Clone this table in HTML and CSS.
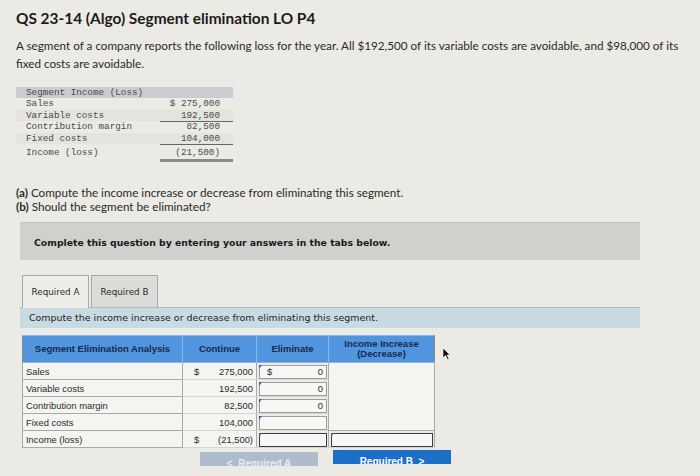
FILE: index.html
```html
<!DOCTYPE html>
<html lang="en">
<head>
<meta charset="utf-8">
<title>QS 23-14 (Algo) Segment elimination LO P4</title>
<link rel="stylesheet" href="styles.css">
</head>
<body>
<div class="page">
  <h1 class="title">QS 23-14 (Algo) Segment elimination LO P4</h1>
  <p class="intro">A segment of a company reports the following loss for the year. All $192,500 of its variable costs are avoidable, and $98,000 of its fixed costs are avoidable.</p>

  <div class="fin">
    <div class="fin-head">Segment Income (Loss)</div>
    <div class="fin-row"><span class="fin-label">Sales</span><span class="fin-val">$ 275,000</span></div>
    <div class="fin-row shade"><span class="fin-label">Variable costs</span><span class="fin-val rule">192,500</span></div>
    <div class="fin-row"><span class="fin-label">Contribution margin</span><span class="fin-val">82,500</span></div>
    <div class="fin-row shade"><span class="fin-label">Fixed costs</span><span class="fin-val rule">104,000</span></div>
    <div class="fin-row total"><span class="fin-label">Income (loss)</span><span class="fin-val double">(21,500)</span></div>
  </div>

  <p class="parts"><b>(a)</b> Compute the income increase or decrease from eliminating this segment.<br><b>(b)</b> Should the segment be eliminated?</p>

  <div class="instr">Complete this question by entering your answers in the tabs below.</div>

  <div class="tabs">
    <div class="tab active">Required A</div>
    <div class="tab">Required B</div>
  </div>
  <div class="prompt">Compute the income increase or decrease from eliminating this segment.</div>

  <div class="table-wrap">
    <table class="sea">
      <colgroup>
        <col class="c-label"><col class="c-cont"><col class="c-elim"><col class="c-inc">
      </colgroup>
      <thead>
        <tr>
          <th>Segment Elimination Analysis</th>
          <th>Continue</th>
          <th>Eliminate</th>
          <th>Income Increase<br>(Decrease)</th>
        </tr>
      </thead>
      <tbody>
        <tr>
          <td class="lbl">Sales</td>
          <td class="num"><span class="cur">$</span><span>275,000</span></td>
          <td class="inp"><div class="box"><span class="cur">$</span><span>0</span></div></td>
          <td class="inc" rowspan="4"></td>
        </tr>
        <tr>
          <td class="lbl">Variable costs</td>
          <td class="num"><span class="cur"></span><span>192,500</span></td>
          <td class="inp"><div class="box"><span class="cur"></span><span>0</span></div></td>
        </tr>
        <tr>
          <td class="lbl">Contribution margin</td>
          <td class="num"><span class="cur"></span><span>82,500</span></td>
          <td class="inp"><div class="box"><span class="cur"></span><span>0</span></div></td>
        </tr>
        <tr>
          <td class="lbl">Fixed costs</td>
          <td class="num"><span class="cur"></span><span>104,000</span></td>
          <td class="inp"><div class="box"></div></td>
        </tr>
        <tr>
          <td class="lbl">Income (loss)</td>
          <td class="num"><span class="cur">$</span><span>(21,500)</span></td>
          <td class="inp"><div class="box dark"></div></td>
          <td class="inp"><div class="box dark"></div></td>
        </tr>
      </tbody>
    </table>
    <svg class="cursor" width="9" height="13" viewBox="0 0 9 13"><path d="M1 1 L1 11 L3.5 8.5 L5.5 12.5 L7 11.8 L5 8 L8 8 Z" fill="#111" stroke="#fff" stroke-width="0.6"/></svg>
  </div>

  <div class="nav">
    <div class="btn prev">&lt;&nbsp; Required A</div>
    <div class="btn next">Required B &nbsp;&gt;</div>
  </div>
</div>
</body>
</html>
```

FILE: styles.css
```css
* { box-sizing: border-box; }

html, body {
  margin: 0;
  padding: 0;
  height: 100%;
  overflow: hidden;
}

body {
  background: #ebeae4;
  color: #222;
  font-family: Lato, "Open Sans", sans-serif;
}

.page {
  padding: 8px 16px 0 16px;
}

.title {
  margin: 0;
  font-family: Lato, sans-serif;
  font-weight: 700;
  font-size: 15.4px;
  line-height: 20px;
  color: #1c1c1c;
}

.intro {
  margin: 8px 0 0 0;
  font-size: 11.7px;
  line-height: 18px;
  color: #2a2a2a;
}

.fin {
  margin-top: 15px;
  width: 217px;
  font-family: "Liberation Mono", monospace;
  font-size: 9.3px;
  color: #4a4a4a;
}

.fin-head {
  background: #c9ccd0;
  height: 11px;
  line-height: 11px;
  padding-left: 10px;
}

.fin-row {
  display: grid;
  grid-template-columns: 144px 73px;
  height: 11.5px;
  line-height: 11.5px;
}

.fin-row.shade { background: #e3e3df; }

.fin-row.total {
  margin-top: 3px;
  height: 14px;
  line-height: 12px;
}

.fin-label { padding-left: 10px; }

.fin-val {
  text-align: right;
  padding-right: 13px;
}

.fin-val.rule { border-bottom: 1px solid #666; }

.fin-val.double { border-bottom: 3px solid #8a8a8a; }

.parts {
  margin: 24px 0 0 0;
  font-size: 11.7px;
  line-height: 14px;
  color: #2a2a2a;
}

.parts b { font-weight: 700; }

.instr {
  margin: 9px 0 0 4px;
  width: 620px;
  height: 38px;
  padding: 13px 0 0 14px;
  background: #d0d0cd;
  border-top: 1px solid #c4c4c1;
  font-family: "DejaVu Sans", Verdana, sans-serif;
  font-weight: 700;
  font-size: 9.3px;
  line-height: 14px;
  color: #1a1a1a;
}

.tabs {
  display: flex;
  gap: 2px;
  margin: 15px 0 0 6px;
  position: relative;
  z-index: 1;
}

.tab {
  width: 67px;
  height: 32px;
  display: flex;
  align-items: center;
  justify-content: center;
  font-family: "DejaVu Sans", Verdana, sans-serif;
  font-size: 8.8px;
  color: #2a2a2a;
  background: #dcdcd8;
  border: 1px solid #a7a7a4;
  border-bottom: none;
}

.tab.active {
  background: #eeede8;
  height: 33px;
  margin-bottom: -1px;
}

.prompt {
  margin-left: 4px;
  width: 620px;
  height: 21px;
  padding: 3px 0 0 9px;
  background: #c8dbe1;
  border-top: 1px solid #a8bcc4;
  font-family: "DejaVu Sans", Verdana, sans-serif;
  font-size: 9.45px;
  line-height: 14px;
  color: #1e1e1e;
}

.table-wrap {
  position: relative;
  margin: 7px 0 0 6px;
}

.sea {
  border-collapse: collapse;
  table-layout: fixed;
  width: 412px;
  font-family: "Liberation Sans", Arial, sans-serif;
  font-size: 9.4px;
  color: #2a2a2a;
}

.c-label { width: 160px; }
.c-cont { width: 74px; }
.c-elim { width: 72px; }
.c-inc { width: 106px; }

.sea th {
  height: 27px;
  background: #5295df;
  color: #15294c;
  font-weight: 700;
  font-size: 9.5px;
  line-height: 10px;
  text-align: center;
  border: 1px solid #8bb6e6;
  padding: 0 2px;
}

.sea th:first-child { border-left-color: #8a8a8a; }
.sea th:last-child { border-right-color: #8a8a8a; }
.sea thead tr { border-top: 1px solid #8a8a8a; }

.sea td {
  height: 17px;
  padding: 0;
  background: #f4f4f1;
  border: 1px solid #a9a9a6;
  line-height: 13px;
}

.sea td.lbl {
  padding-left: 3px;
  text-align: left;
}

.sea td.num {
  padding: 0 3px 0 11px;
  text-align: right;
  border-top-color: #d6d6d3;
  border-bottom-color: #d6d6d3;
}

.num span,
.box span { display: inline-block; }

.sea td.num .cur,
.box .cur {
  float: left;
}

.sea td.inp {
  padding: 1px 1px 0 2px;
  background: #ecebe6;
  border-top-color: #d6d6d3;
  border-bottom-color: #d6d6d3;
}

.box {
  position: relative;
  display: block;
  height: 14px;
  line-height: 12px;
  padding: 0 3px 0 7px;
  text-align: right;
  background: #f7f7f5;
  border: 1px solid #9d9d9a;
}

.box.dark { border-color: #3c3c3c; }

.box::before {
  content: "";
  position: absolute;
  left: -1px;
  top: -1px;
  border-top: 4px solid #2b63b8;
  border-right: 3px solid transparent;
}

.sea td.inc {
  background: #f4f4f1;
  border-bottom-color: #a9a9a6;
}

.cursor {
  position: absolute;
  left: 420px;
  top: 12px;
}

.nav {
  display: flex;
  align-items: flex-start;
  gap: 15px;
  margin: 2px 0 0 184px;
}

.btn {
  width: 118px;
  height: 14px;
  overflow: hidden;
  padding-top: 6px;
  text-align: center;
  font-family: "Liberation Sans", Arial, sans-serif;
  font-weight: 700;
  font-size: 10px;
  line-height: 12px;
  color: #fff;
}

.btn.prev {
  background: #aebccb;
  margin-top: 2px;
  color: #e6ecf2;
}

.btn.next {
  background: #1d6fc5;
}
```
